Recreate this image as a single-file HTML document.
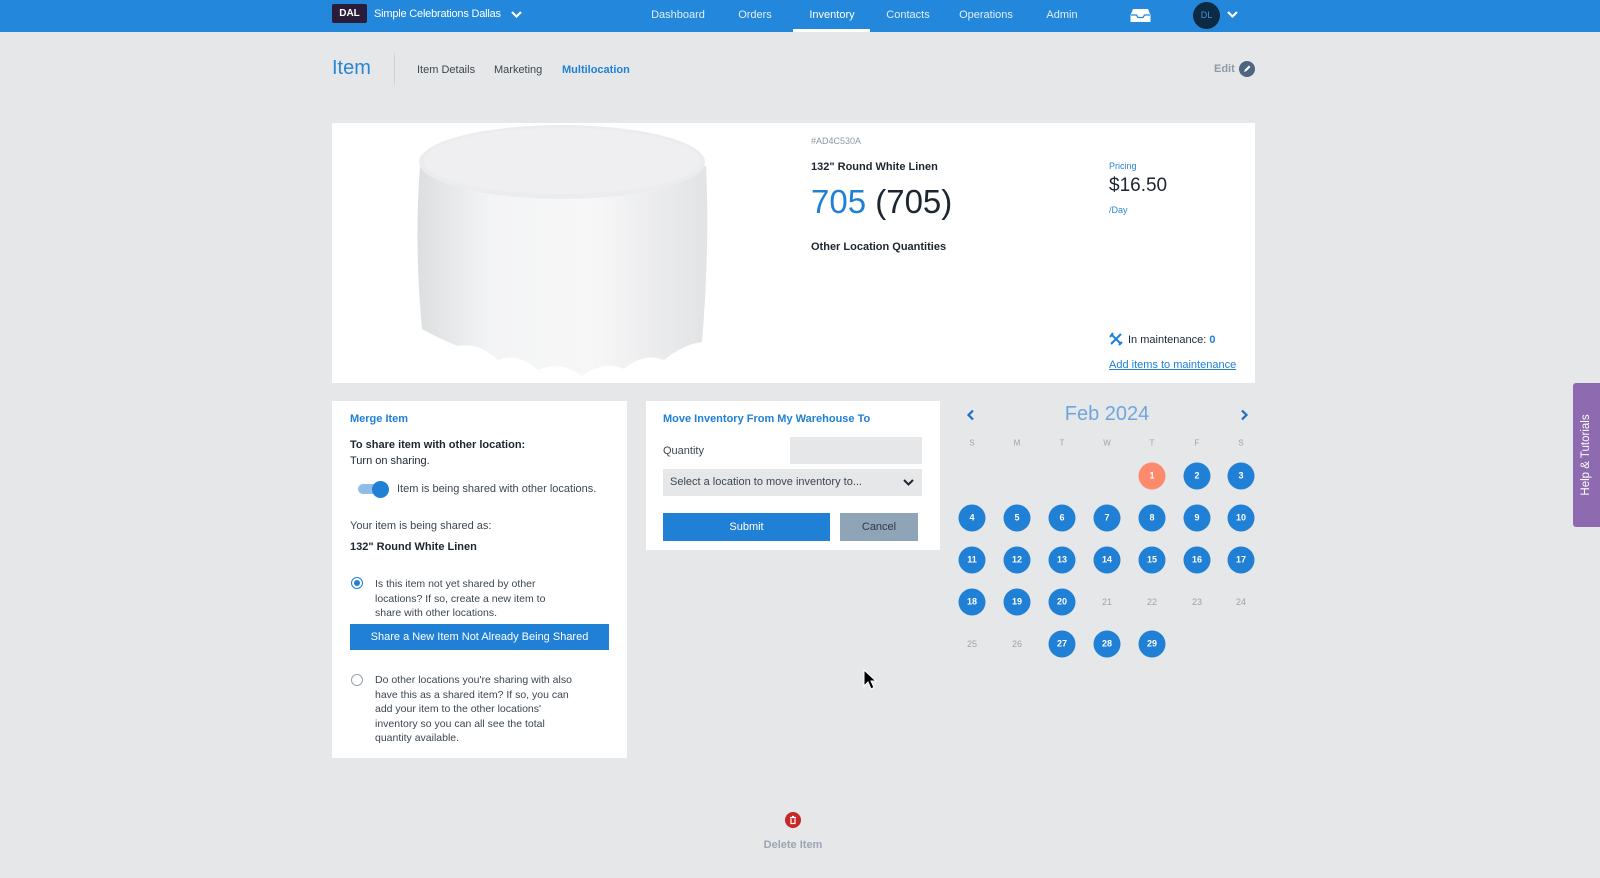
<!DOCTYPE html>
<html><head><meta charset="utf-8"><style>
*{box-sizing:border-box;margin:0;padding:0}
body{width:1600px;height:878px;background:#e6e7e9;font-family:"Liberation Sans",sans-serif;position:relative;overflow:hidden;color:#1d2530}
.a{position:absolute;white-space:nowrap}
.hdr{position:absolute;left:0;top:0;width:1600px;height:32px;background:#2388db}
.nav{color:#e3eefa;font-size:11px;top:9px;transform:translateX(-50%)}
.card{position:absolute;background:#fff}
.s11{font-size:11px}
.b{font-weight:bold}
.blue{color:#1f80d6}
.day{position:absolute;width:27px;height:27px;border-radius:50%;background:#1f80d6;color:#fff;font-size:9px;font-weight:bold;text-align:center;line-height:27px;transform:translate(-50%,-50%)}
.dg{position:absolute;color:#9aa3ad;font-size:9px;transform:translate(-50%,-50%)}
</style></head><body>
<div class="hdr"></div>
<div class="a" style="left:332px;top:4px;width:35px;height:19px;background:#2b1d3a;border-radius:2px;color:#fff;font-size:10px;font-weight:bold;text-align:center;line-height:19px">DAL</div>
<div class="a" style="left:374px;top:8px;color:#fff;font-size:11px;letter-spacing:-0.2px">Simple Celebrations Dallas</div>
<svg class="a" style="left:511px;top:10px" width="11" height="9" viewBox="0 0 11 9"><path d="M1 2l4.5 4.5L10 2" stroke="#fff" stroke-width="2.2" fill="none"/></svg>
<div class="a nav" style="left:678px">Dashboard</div>
<div class="a nav" style="left:755px">Orders</div>
<div class="a nav" style="left:832px;color:#fff">Inventory</div>
<div class="a" style="left:793px;top:29px;width:77px;height:3px;background:#fff"></div>
<div class="a nav" style="left:908px">Contacts</div>
<div class="a nav" style="left:986px">Operations</div>
<div class="a nav" style="left:1062px">Admin</div>
<svg class="a" style="left:1130px;top:8px" width="21" height="15" viewBox="0 0 21 15"><path d="M3 1h15l2.5 6v7H0.5V7z" fill="#fff"/><path d="M1 7h5.5l1.5 2.5h5l1.5-2.5H20" stroke="#2388db" stroke-width="1.3" fill="none"/></svg>
<div class="a" style="left:1193px;top:2px;width:27px;height:27px;border-radius:50%;background:#0d2a45;color:#4d8fd6;font-size:9px;text-align:center;line-height:27px">DL</div>
<svg class="a" style="left:1227px;top:10px" width="11" height="9" viewBox="0 0 11 9"><path d="M1 2l4.5 4.5L10 2" stroke="#fff" stroke-width="2.2" fill="none"/></svg>

<div class="a" style="left:332px;top:57px;font-size:20px;color:#2a85d4">Item</div>
<div class="a" style="left:394px;top:53px;width:1px;height:32px;background:#cfd3d8"></div>
<div class="a s11" style="left:417px;top:64px;color:#3c4650">Item Details</div>
<div class="a s11" style="left:494px;top:64px;color:#3c4650">Marketing</div>
<div class="a s11 b blue" style="left:562px;top:64px">Multilocation</div>
<div class="a s11 b" style="left:1214px;top:63px;color:#8e9aa6">Edit</div>
<div class="a" style="left:1239px;top:61px;width:16px;height:16px;border-radius:50%;background:#4d6580"></div>
<svg class="a" style="left:1242px;top:64px" width="10" height="10" viewBox="0 0 10 10"><path d="M2 8l1-2.5L7 1.5l1.5 1.5L4.5 7z" fill="#fff"/></svg>

<div class="card" style="left:332px;top:123px;width:923px;height:260px"></div>
<svg class="a" style="left:410px;top:124px" width="305" height="258" viewBox="0 0 305 258">
<defs><linearGradient id="g" x1="0" x2="1"><stop offset="0" stop-color="#dcdee0"/><stop offset=".25" stop-color="#f3f4f5"/><stop offset=".6" stop-color="#f7f7f8"/><stop offset="1" stop-color="#e2e3e5"/></linearGradient></defs>
<path d="M10 42 Q4 120 12 205 Q30 215 48 222 Q68 218 88 236 Q108 228 128 246 Q150 236 172 252 Q194 236 214 245 Q234 228 254 236 Q274 220 292 218 Q300 120 296 42 Z" fill="url(#g)"/>
<ellipse cx="152" cy="38" rx="143" ry="37" fill="#ebecee"/>
<ellipse cx="152" cy="37" rx="138" ry="33" fill="#efeff1"/>
</svg>
<div class="a" style="left:811px;top:136px;font-size:9px;color:#8e98a3">#AD4C530A</div>
<div class="a s11 b" style="left:811px;top:161px">132" Round White Linen</div>
<div class="a" style="left:811px;top:183px;font-size:33px;color:#1d2530"><span class="blue">705</span> (705)</div>
<div class="a s11 b" style="left:811px;top:241px">Other Location Quantities</div>
<div class="a" style="left:1109px;top:161px;font-size:9px;color:#2a85d4">Pricing</div>
<div class="a" style="left:1109px;top:175px;font-size:19px">$16.50</div>
<div class="a" style="left:1109px;top:205px;font-size:9px;color:#2a85d4">/Day</div>
<svg class="a" style="left:1109px;top:332px" width="14" height="14" viewBox="0 0 14 14"><path d="M2 2l10 10M12 2L2 12M1 5l3-4M10 13l3-3" stroke="#1f80d6" stroke-width="2" fill="none"/></svg>
<div class="a s11" style="left:1128px;top:334px">In maintenance: <b class="blue">0</b></div>
<div class="a s11 blue" style="left:1109px;top:359px;text-decoration:underline">Add items to maintenance</div>

<div class="card" style="left:332px;top:401px;width:295px;height:357px"></div>
<div class="a s11 b blue" style="left:350px;top:413px">Merge Item</div>
<div class="a s11 b" style="left:350px;top:439px">To share item with other location:</div>
<div class="a s11" style="left:350px;top:455px">Turn on sharing.</div>
<div class="a" style="left:358px;top:484px;width:28px;height:10px;border-radius:5px;background:#8fbde8"></div>
<div class="a" style="left:372px;top:481px;width:17px;height:17px;border-radius:50%;background:#1f80d6"></div>
<div class="a s11" style="left:397px;top:483px;color:#3c4650">Item is being shared with other locations.</div>
<div class="a s11" style="left:350px;top:520px;color:#3c4650">Your item is being shared as:</div>
<div class="a s11 b" style="left:350px;top:541px">132" Round White Linen</div>
<div class="a" style="left:351px;top:577px;width:12px;height:12px;border-radius:50%;border:1.5px solid #1f80d6"></div>
<div class="a" style="left:354px;top:580px;width:6px;height:6px;border-radius:50%;background:#1f80d6"></div>
<div class="a" style="left:375px;top:577px;font-size:10.5px;line-height:14.5px;color:#3c4650">Is this item not yet shared by other<br>locations? If so, create a new item to<br>share with other locations.</div>
<div class="a" style="left:350px;top:624px;width:259px;height:26px;background:#1f80d6;color:#fff;font-size:11px;text-align:center;line-height:26px">Share a New Item Not Already Being Shared</div>
<div class="a" style="left:351px;top:674px;width:12px;height:12px;border-radius:50%;border:1.2px solid #9aa3ad"></div>
<div class="a" style="left:375px;top:673px;font-size:10.5px;line-height:14.5px;color:#3c4650">Do other locations you're sharing with also<br>have this as a shared item? If so, you can<br>add your item to the other locations'<br>inventory so you can all see the total<br>quantity available.</div>

<div class="card" style="left:646px;top:401px;width:294px;height:149px"></div>
<div class="a s11 b blue" style="left:663px;top:413px">Move Inventory From My Warehouse To</div>
<div class="a s11" style="left:663px;top:445px;color:#3c4650">Quantity</div>
<div class="a" style="left:790px;top:437px;width:132px;height:27px;background:#e6e7e9"></div>
<div class="a" style="left:663px;top:469px;width:259px;height:27px;background:#e6e7e9"></div>
<div class="a s11" style="left:670px;top:476px;color:#3c4650">Select a location to move inventory to...</div>
<svg class="a" style="left:903px;top:478px" width="11" height="9" viewBox="0 0 11 9"><path d="M1 2l4.5 4.5L10 2" stroke="#1d2530" stroke-width="2" fill="none"/></svg>
<div class="a" style="left:663px;top:513px;width:167px;height:28px;background:#1f80d6;color:#fff;font-size:11px;text-align:center;line-height:28px">Submit</div>
<div class="a" style="left:840px;top:513px;width:78px;height:28px;background:#8fa4b6;color:#2c3a48;font-size:11px;text-align:center;line-height:28px">Cancel</div>

<svg class="a" style="left:966px;top:409px" width="10" height="12" viewBox="0 0 10 12"><path d="M7 1.5L2.5 6 7 10.5" stroke="#1f6fc0" stroke-width="2.2" fill="none"/></svg>
<svg class="a" style="left:1239px;top:409px" width="10" height="12" viewBox="0 0 10 12"><path d="M3 1.5L7.5 6 3 10.5" stroke="#1f6fc0" stroke-width="2.2" fill="none"/></svg>
<div class="a" style="left:1107px;top:403px;transform:translateX(-50%);font-size:20px;color:#6fa6dc">Feb 2024</div>
<div id="cal"></div>
<script>
var cx=[972,1017,1062,1107,1152,1197,1241],ry=[476,518,560,602,644],h='';
var hd='SMTWTFS';for(var i=0;i<7;i++)h+='<div class="dg" style="left:'+cx[i]+'px;top:443px;font-size:8px">'+hd[i]+'</div>';
var grey={21:1,22:1,23:1,24:1,25:1,26:1};
for(var d=1;d<=29;d++){var p=d+3,c=p%7,r=Math.floor(p/7);
if(grey[d])h+='<div class="dg" style="left:'+cx[c]+'px;top:'+ry[r]+'px">'+d+'</div>';
else h+='<div class="day" style="left:'+cx[c]+'px;top:'+ry[r]+'px'+(d==1?';background:#fd8a6c':'')+'">'+d+'</div>';}
document.getElementById('cal').innerHTML=h;
</script>

<div class="a" style="left:1573px;top:383px;width:27px;height:144px;background:#8e6bb0;border-radius:3px 0 0 3px"></div>
<div class="a" style="left:1586px;top:455px;transform:translate(-50%,-50%) rotate(-90deg);color:#fff;font-size:11.5px">Help &amp; Tutorials</div>

<div class="a" style="left:785px;top:812px;width:16px;height:16px;border-radius:50%;background:#c62828"></div>
<svg class="a" style="left:788px;top:815px" width="10" height="10" viewBox="0 0 10 10"><path d="M2 2.5h6M4 1.5h2M3 3.5v5h4v-5" stroke="#fff" stroke-width="1.2" fill="none"/></svg>
<div class="a s11 b" style="left:793px;top:839px;transform:translateX(-50%);color:#9aa5b1">Delete Item</div>
<svg class="a" style="left:863px;top:669px" width="14" height="22" viewBox="0 0 14 22"><path d="M1 1v16l4-4 3 7 3-1.5-3-6.5h5z" fill="#000" stroke="#fff" stroke-width="1"/></svg>
</body></html>
